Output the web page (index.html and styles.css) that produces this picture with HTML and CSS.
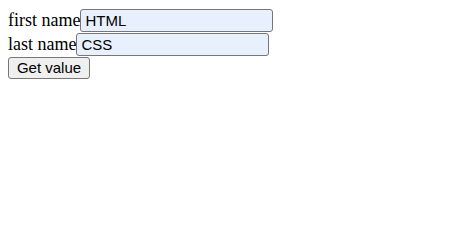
FILE: index.html
```html
<!DOCTYPE html>
<html>
<head>
<meta charset="utf-8">
<link rel="stylesheet" href="styles.css">
</head>
<body class="page">
<form class="form">
<label class="row">first name<input class="field" type="text" value="HTML"></label>
<label class="row">last name<input class="field" type="text" value="CSS"></label>
<div class="row"><button class="btn" type="button">Get value</button></div>
</form>
</body>
</html>
```
FILE: styles.css
```css
html, body { background: #fff; }
.page {
  margin: 8px;
  font-family: "Liberation Serif", "Times New Roman", serif;
  font-size: 18px;
  color: #000;
}
.form { margin: 0; }
.row {
  display: flex;
  align-items: baseline;
  box-sizing: border-box;
  height: 24px;
  padding-top: 1px;
  line-height: 20px;
}
.field {
  box-sizing: border-box;
  width: 193px;
  height: 23px;
  margin: 0;
  padding: 1px 4px;
  border: 1px solid #767676;
  border-radius: 3px;
  background: #e8f0fe;
  color: #000;
  font-family: "Liberation Sans", Arial, sans-serif;
  font-size: 15px;
}
.btn {
  box-sizing: border-box;
  width: 82px;
  height: 22px;
  margin: 0;
  padding: 0;
  border: 1px solid #767676;
  border-radius: 3px;
  background: #efefef;
  color: #000;
  font-family: "Liberation Sans", Arial, sans-serif;
  font-size: 15px;
  line-height: 18px;
  text-align: center;
}
```
